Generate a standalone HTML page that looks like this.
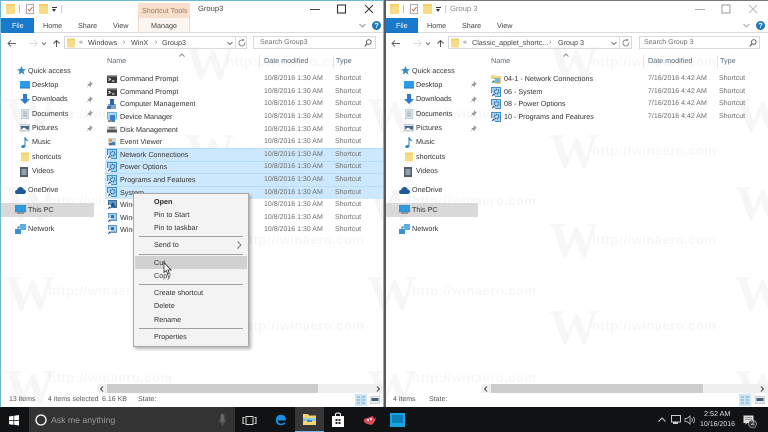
<!DOCTYPE html>
<html><head><meta charset="utf-8"><title>Group3</title>
<style>
html,body{margin:0;padding:0;background:#fff}
#r{position:relative;width:768px;height:432px;overflow:hidden;background:#fff;font-family:"Liberation Sans",sans-serif;font-size:7.2px;color:#333;filter:blur(.35px);text-rendering:geometricPrecision}
.t{position:absolute;white-space:nowrap;line-height:12px;height:12px}
.b{position:absolute}
.g{color:#6d6d6d;font-size:7px}
.h{color:#5a6a7a}
.m{color:#444}
svg.i{position:absolute;overflow:visible}
#wm{position:absolute;left:0;top:0}
</style></head><body>
<div id="r">
<svg width="0" height="0" style="position:absolute">
<defs>
<symbol id="fo" viewBox="0 0 9 10"><rect width="9" height="10" rx=".5" fill="#f8dc85"/><rect width="9" height="2" fill="#f3cf6a"/></symbol>
<symbol id="cmd" viewBox="0 0 10 10"><rect y="1" width="10" height="8" fill="#3a3a3a"/><rect y="1" width="10" height="1.5" fill="#9a9a9a"/><path d="M1.5 4l2 1.3-2 1.3M5 7h2.5" stroke="#fff" fill="none" stroke-width=".9"/></symbol>
<symbol id="cm" viewBox="0 0 10 10"><rect x="1" y="5" width="8" height="5" fill="#7d9fc9"/><rect x="3" y="0" width="4" height="6" fill="#2c5fae"/><rect x="0" y="7" width="4" height="3" fill="#3b6fb8"/></symbol>
<symbol id="dm" viewBox="0 0 10 10"><rect width="10" height="7.5" fill="#6fb3dd"/><rect x="1" y="1" width="8" height="5.5" fill="#a9d6ee"/><rect x="3" y="3" width="5" height="7" fill="#3a7fc0"/><rect x="1" y="8" width="4" height="2" fill="#8a8a8a"/></symbol>
<symbol id="dk" viewBox="0 0 10 10"><rect y="2" width="10" height="6" fill="#d5d5d5"/><rect y="5.5" width="10" height="3" fill="#555"/><rect x="2" y="3" width="6" height="1.5" fill="#777"/></symbol>
<symbol id="ev" viewBox="0 0 10 10"><rect x="1" y="1" width="8" height="8" fill="#cfd6dc"/><rect x="2" y="2" width="3" height="3" fill="#e2a33b"/><rect x="5" y="5" width="3" height="3" fill="#3b7fc2"/><rect x="2" y="6" width="3" height="2" fill="#666"/></symbol>
<symbol id="ap" viewBox="0 0 10 10"><rect width="10" height="10" fill="#3f8fcb"/><rect x="1" y="1" width="8" height="8" fill="#a9d5ef"/><circle cx="5.6" cy="4.6" r="2.2" fill="none" stroke="#1e5f9e" stroke-width="1.3" stroke-dasharray="1.2 .7"/><path d="M0 6h4v4H0z" fill="#fff"/><path d="M1 9.2l2-2M1.6 7H3.2V8.6" stroke="#1a4f92" fill="none" stroke-width=".8"/></symbol>
<symbol id="wn" viewBox="0 0 10 10"><rect x="1" y="0" width="9" height="8" fill="#5f98c8"/><rect x="2" y="1" width="7" height="5.5" fill="#aed3ec"/><rect x="4" y="2" width="3" height="3" fill="#2f6fae"/><path d="M0 5h4v5H0z" fill="#fff"/><path d="M1 9l2-2M1.6 7H3.2V8.6" stroke="#1a4f92" fill="none" stroke-width=".8"/></symbol>
<symbol id="wb" viewBox="0 0 10 10"><rect x="1" y="0" width="9" height="8" fill="#3f6f9f"/><rect x="2" y="1" width="7" height="5" fill="#5d9ad0"/><path d="M3 6l3-4 2 4z" fill="#1d4d80"/><path d="M0 5h4v5H0z" fill="#fff"/><path d="M1 9l2-2M1.6 7H3.2V8.6" stroke="#1a4f92" fill="none" stroke-width=".8"/></symbol>
<symbol id="nc" viewBox="0 0 10 10"><path d="M0 1h3l1 1h6v8H0z" fill="#f3d679"/><rect x="3" y="4" width="6" height="5" fill="#7fb2d8"/><path d="M0 5h4v5H0z" fill="#fff"/><path d="M1 9l2-2M1.6 7H3.2V8.6" stroke="#1a6f42" fill="none" stroke-width=".8"/></symbol>
<symbol id="pin" viewBox="0 0 7 7"><path d="M4 .5l2.5 2.5-1 .3-1 1.2-.2 1.4L1.7 3.3l1.4-.2 1.2-1zM2.6 4.4L.6 6.4" fill="#9a9a9a" stroke="#8a8a8a" stroke-width=".5"/></symbol>
<symbol id="qa" viewBox="0 0 9 9"><path d="M4.5 0l1.3 3 3.2.2-2.5 2 .9 3.3-2.9-1.8-2.8 1.8.8-3.3L0 3.2 3.2 3z" fill="#3a8cc8"/></symbol>
<symbol id="dsk" viewBox="0 0 10 8"><rect width="10" height="7.5" rx=".6" fill="#2b9be8"/><rect y="6.5" width="10" height="1" fill="#1b78bf"/></symbol>
<symbol id="dl" viewBox="0 0 10 10"><path d="M3 0h4v5h3l-5 5-5-5h3z" fill="#2d7cc9"/></symbol>
<symbol id="doc" viewBox="0 0 8 10"><rect width="8" height="10" fill="#dfe5ea" stroke="#8fa3b3" stroke-width=".6"/><path d="M2 3h4M2 5h4M2 7h4" stroke="#7d95aa" stroke-width=".8"/></symbol>
<symbol id="pic" viewBox="0 0 10 8"><rect width="10" height="7" fill="#dbe3ea" stroke="#8a9aa8" stroke-width=".5"/><rect x="1" y="2" width="8" height="3.5" fill="#45688c"/><path d="M1 5.5l3-2 3 2z" fill="#fff"/></symbol>
<symbol id="mus" viewBox="0 0 8 11"><path d="M3.5 0h1c.3 2 3 2.5 2.5 5-.5-1.3-1.5-1.6-2.5-1.8V9C4.500 10.300 3 11 1.800 11 .6 11 0 10.200.3 9.300.7 8.200 2.300 7.700 3.500 8.100z" fill="#2f7fcb"/></symbol>
<symbol id="vid" viewBox="0 0 8 10"><rect width="8" height="10" fill="#565a63"/><rect x="1.500" y="2" width="5" height="6" fill="#8fa0b5"/></symbol>
<symbol id="od" viewBox="0 0 11 7"><path d="M2 7C.6 7 0 6 0 5c0-1.200 1-2 2-2 .5-1.800 2-3 3.500-3C7 0 8.300 1 8.800 2.500 10 2.600 11 3.600 11 4.800 11 6 10 7 9 7z" fill="#1f5a98"/></symbol>
<symbol id="pc" viewBox="0 0 11 9"><rect width="11" height="7" fill="#2f9ae0" stroke="#5a6a75" stroke-width=".5"/><rect x="2" y="7.500" width="7" height="1.300" fill="#7d8790"/></symbol>
<symbol id="net" viewBox="0 0 11 10"><rect x="0" y="5" width="6" height="5" fill="#3a8fd0"/><rect x="5" y="0" width="6" height="6" fill="#5aaee6"/><path d="M3 5V3h2" stroke="#2d6ea5" fill="none"/></symbol>
<symbol id="chk" viewBox="0 0 8 10"><rect x=".4" y=".4" width="7.200" height="9.200" fill="#fff" stroke="#9a9a9a" stroke-width=".8"/><path d="M2 5l1.500 2 3-4" stroke="#c05a3a" fill="none" stroke-width=".9"/></symbol>
<symbol id="ref" viewBox="0 0 8 8"><path d="M6.800 3.500A3 3 0 1 1 4 1h1.500M4.500 0l1.200 1-1.200 1" fill="none" stroke="#6d6d6d" stroke-width=".8"/></symbol>
<symbol id="srch" viewBox="0 0 8 8"><circle cx="4.800" cy="3" r="2.300" fill="none" stroke="#555" stroke-width=".9"/><path d="M3.200 4.600L.8 7.200" stroke="#555" stroke-width="1.100"/></symbol>
<symbol id="det" viewBox="0 0 12 12"><rect width="12" height="12" fill="#cde6f7"/><path d="M2 3h3M2 6h3M2 9h3M6.500 3H10M6.500 6H10M6.500 9H10" stroke="#7ba2bf" stroke-width="1"/></symbol>
<symbol id="lg" viewBox="0 0 10 8"><rect width="10" height="8" fill="#e8e8e8" stroke="#999" stroke-width=".5"/><rect x="1.500" y="2" width="7" height="3" fill="#45607c"/></symbol>
</defs>
</svg>

<!-- watermark -->
<svg id="wm" width="768" height="432">
<g fill="#000" opacity=".03" font-family="Liberation Serif,serif" font-weight="bold" font-size="50">
<text x="185" y="80">W</text><text x="185" y="168">W</text><text x="185" y="257">W</text><text x="185" y="344">W</text>
<text x="549" y="80">W</text><text x="549" y="168">W</text><text x="549" y="257">W</text><text x="549" y="344">W</text>
<text x="5" y="132">W</text><text x="5" y="220">W</text><text x="5" y="310">W</text><text x="5" y="404">W</text>
<text x="367" y="132">W</text><text x="367" y="220">W</text><text x="367" y="310">W</text><text x="367" y="404">W</text>
<text x="735" y="132">W</text><text x="735" y="220">W</text><text x="735" y="310">W</text><text x="735" y="404">W</text>
</g>
<g fill="#000" opacity=".03" font-family="Liberation Sans,sans-serif" font-weight="bold" font-size="13" letter-spacing=".5">
<text x="226" y="66">http://winaero.com</text><text x="226" y="155">http://winaero.com</text><text x="240" y="244">http://winaero.com</text><text x="240" y="330">http://winaero.com</text>
<text x="592" y="66">http://winaero.com</text><text x="592" y="155">http://winaero.com</text><text x="592" y="244">http://winaero.com</text><text x="592" y="330">http://winaero.com</text>
<text x="48" y="118">http://winaero.com</text><text x="48" y="205">http://winaero.com</text><text x="48" y="295">http://winaero.com</text><text x="48" y="382">http://winaero.com</text>
<text x="412" y="118">http://winaero.com</text><text x="412" y="205">http://winaero.com</text><text x="412" y="295">http://winaero.com</text><text x="412" y="382">http://winaero.com</text>
</g>
</svg>

<!-- LEFT WINDOW frame -->
<div class="b" style="left:0;top:0;width:384px;height:1px;background:#6fb7d8"></div>
<div class="b" style="left:0;top:0;width:1px;height:407px;background:#6fb7d8"></div>
<div class="b" style="left:383px;top:0;width:1px;height:407px;background:#6fb7d8"></div>
<!-- RIGHT WINDOW frame -->
<div class="b" style="left:384px;top:0;width:384px;height:1px;background:#777"></div>
<div class="b" style="left:384px;top:0;width:2px;height:407px;background:#555b60"></div>

<!-- LEFT: title/ribbon -->
<svg class="i" style="left:6px;top:4px" width="9" height="10"><use href="#fo"/></svg>
<div class="b" style="left:19px;top:5px;width:1px;height:8px;background:#bbb"></div>
<svg class="i" style="left:26px;top:4px" width="8" height="10"><use href="#chk"/></svg>
<svg class="i" style="left:39px;top:4px" width="9" height="10"><use href="#fo"/></svg>
<div class="b" style="left:52px;top:7px;width:5px;height:1px;background:#333"></div>
<div class="b" style="left:52px;top:9px;width:0;height:0;border:2.500px solid transparent;border-top:3px solid #333"></div>
<div class="b" style="left:61px;top:5px;width:1px;height:8px;background:#ccc"></div>
<div class="b" style="left:138px;top:3px;width:52px;height:15px;background:#f8dfcd"></div>
<div class="b" style="left:138px;top:18px;width:52px;height:15px;background:#fdf6f0;border-left:1px solid #f0d8c6;border-right:1px solid #f0d8c6;box-sizing:border-box"></div>
<div class="t" style="left:142px;top:5px;color:#a5765a">Shortcut Tools</div>
<div class="t" style="left:198px;top:3px;color:#444;font-size:7.600px">Group3</div>
<div class="b" style="left:0;top:32px;width:383px;height:1px;background:#dadbdc"></div>
<div class="b" style="left:1px;top:18px;width:33px;height:15px;background:#1979ca"></div>
<div class="t" style="left:12px;top:20px;color:#fff">File</div>
<div class="t m" style="left:43px;top:20px">Home</div>
<div class="t m" style="left:78px;top:20px">Share</div>
<div class="t m" style="left:113px;top:20px">View</div>
<div class="t m" style="left:151px;top:20px">Manage</div>
<svg class="i" style="left:310px;top:4px" width="70" height="10"><path d="M0 5.500H10" stroke="#444"/><rect x="27.500" y="1" width="8" height="8" fill="none" stroke="#333" stroke-width="1.100"/><path d="M55 1l8 8M63 1l-8 8" stroke="#333" stroke-width="1"/></svg>
<svg class="i" style="left:359px;top:23px" width="7" height="5"><path d="M.5 1l3 3 3-3" stroke="#999" fill="none"/></svg>
<div class="b" style="left:372px;top:21px;width:9px;height:9px;border-radius:5px;background:#1a75bd;color:#fff;font:bold 7.500px/9px 'Liberation Sans',sans-serif;text-align:center">?</div>

<!-- LEFT: address -->
<svg class="i" style="left:7px;top:39px" width="60" height="9"><path d="M9 4.500H1M4 1.500L1 4.500l3 3" stroke="#666" fill="none" stroke-width="1"/><path d="M23 4.500h7M27 1.500l3 3-3 3" stroke="#dcdcdc" fill="none"/><path d="M35 3.500l2 2 2-2" stroke="#777" fill="none"/><path d="M49.500 8V1.500M46.500 4.500l3-3 3 3" stroke="#555" fill="none" stroke-width="1"/></svg>
<div class="b" style="left:64px;top:36px;width:183px;height:13px;border:1px solid #d9d9d9;box-sizing:border-box"></div>
<svg class="i" style="left:67px;top:38px" width="8" height="10"><use href="#fo"/></svg>
<div class="t g" style="left:79px;top:37px">«</div>
<div class="t m" style="left:88px;top:37px">Windows</div>
<div class="t g" style="left:123px;top:37px">›</div>
<div class="t m" style="left:131px;top:37px">WinX</div>
<div class="t g" style="left:155px;top:37px">›</div>
<div class="t m" style="left:162px;top:37px">Group3</div>
<svg class="i" style="left:227px;top:41px" width="7" height="5"><path d="M.5 1l2.500 2.500L5.500 1" stroke="#777" fill="none"/></svg>
<div class="b" style="left:235px;top:37px;width:1px;height:11px;background:#ddd"></div>
<svg class="i" style="left:238px;top:39px" width="8" height="8"><use href="#ref"/></svg>
<div class="b" style="left:253px;top:36px;width:123px;height:13px;border:1px solid #d9d9d9;box-sizing:border-box"></div>
<div class="t g" style="left:260px;top:37px">Search Group3</div>
<svg class="i" style="left:364px;top:39px" width="8" height="8"><use href="#srch"/></svg>

<!-- LEFT: header -->
<svg class="i" style="left:179px;top:53px" width="6" height="4"><path d="M.5 3.500L3 1l2.500 2.500" stroke="#888" fill="none"/></svg>
<div class="t h" style="left:107px;top:55px">Name</div>
<div class="t h" style="left:264px;top:55px">Date modified</div>
<div class="t h" style="left:336px;top:55px">Type</div>
<div class="b" style="left:259px;top:55px;width:1px;height:13px;background:#e5e5e5"></div>
<div class="b" style="left:333px;top:55px;width:1px;height:13px;background:#e5e5e5"></div>

<!-- LEFT: nav -->
<svg class="i" style="left:17px;top:66px" width="9" height="9"><use href="#qa"/></svg><div class="t" style="left:28px;top:65px">Quick access</div>
<svg class="i" style="left:20px;top:81px" width="10" height="8"><use href="#dsk"/></svg><div class="t" style="left:32px;top:79px">Desktop</div><svg class="i" style="left:86px;top:81px" width="7" height="7"><use href="#pin"/></svg>
<svg class="i" style="left:20px;top:94px" width="10" height="10"><use href="#dl"/></svg><div class="t" style="left:32px;top:93px">Downloads</div><svg class="i" style="left:86px;top:96px" width="7" height="7"><use href="#pin"/></svg>
<svg class="i" style="left:21px;top:109px" width="8" height="10"><use href="#doc"/></svg><div class="t" style="left:32px;top:108px">Documents</div><svg class="i" style="left:86px;top:110px" width="7" height="7"><use href="#pin"/></svg>
<svg class="i" style="left:20px;top:124px" width="10" height="8"><use href="#pic"/></svg><div class="t" style="left:32px;top:122px">Pictures</div><svg class="i" style="left:86px;top:125px" width="7" height="7"><use href="#pin"/></svg>
<svg class="i" style="left:21px;top:137px" width="8" height="11"><use href="#mus"/></svg><div class="t" style="left:32px;top:136px">Music</div>
<svg class="i" style="left:21px;top:152px" width="8" height="10"><use href="#fo"/></svg><div class="t" style="left:32px;top:151px">shortcuts</div>
<svg class="i" style="left:20px;top:167px" width="8" height="10"><use href="#vid"/></svg><div class="t" style="left:32px;top:165px">Videos</div>
<svg class="i" style="left:15px;top:187px" width="11" height="7"><use href="#od"/></svg><div class="t" style="left:28px;top:184px">OneDrive</div>
<div class="b" style="left:1px;top:203px;width:93px;height:14px;background:#d9d9d9"></div>
<svg class="i" style="left:15px;top:205px" width="11" height="9"><use href="#pc"/></svg><div class="t" style="left:28px;top:204px">This PC</div>
<svg class="i" style="left:15px;top:224px" width="11" height="10"><use href="#net"/></svg><div class="t" style="left:28px;top:223px">Network</div>

<!-- LEFT: selection -->
<div class="b" style="left:105px;top:148px;width:278px;height:13px;background:#cde8fc;border-top:1px solid #b5dcfa;box-sizing:border-box"></div>
<div class="b" style="left:105px;top:161px;width:278px;height:12px;background:#cde8fc;border-top:1px solid #b5dcfa;box-sizing:border-box"></div>
<div class="b" style="left:105px;top:173px;width:278px;height:13px;background:#cde8fc;border-top:1px solid #b5dcfa;box-sizing:border-box"></div>
<div class="b" style="left:105px;top:186px;width:278px;height:13px;background:#cde8fc;border-top:1px solid #b5dcfa;box-sizing:border-box"></div>

<!-- LEFT: rows -->
<svg class="i" style="left:107px;top:74px" width="10" height="10"><use href="#cmd"/></svg><div class="t" style="left:120px;top:73px">Command Prompt</div><div class="t g" style="left:264px;top:73px">10/8/2016 1:30 AM</div><div class="t g" style="left:335px;top:73px">Shortcut</div>
<svg class="i" style="left:107px;top:87px" width="10" height="10"><use href="#cmd"/></svg><div class="t" style="left:120px;top:85.500px">Command Prompt</div><div class="t g" style="left:264px;top:85.500px">10/8/2016 1:30 AM</div><div class="t g" style="left:335px;top:85.500px">Shortcut</div>
<svg class="i" style="left:107px;top:99px" width="10" height="10"><use href="#cm"/></svg><div class="t" style="left:120px;top:98px">Computer Management</div><div class="t g" style="left:264px;top:98px">10/8/2016 1:30 AM</div><div class="t g" style="left:335px;top:98px">Shortcut</div>
<svg class="i" style="left:107px;top:112px" width="10" height="10"><use href="#dm"/></svg><div class="t" style="left:120px;top:111px">Device Manager</div><div class="t g" style="left:264px;top:111px">10/8/2016 1:30 AM</div><div class="t g" style="left:335px;top:111px">Shortcut</div>
<svg class="i" style="left:107px;top:124px" width="10" height="10"><use href="#dk"/></svg><div class="t" style="left:120px;top:123.500px">Disk Management</div><div class="t g" style="left:264px;top:123.500px">10/8/2016 1:30 AM</div><div class="t g" style="left:335px;top:123.500px">Shortcut</div>
<svg class="i" style="left:107px;top:137px" width="10" height="10"><use href="#ev"/></svg><div class="t" style="left:120px;top:136px">Event Viewer</div><div class="t g" style="left:264px;top:136px">10/8/2016 1:30 AM</div><div class="t g" style="left:335px;top:136px">Shortcut</div>
<svg class="i" style="left:107px;top:149px" width="10" height="10"><use href="#ap"/></svg><div class="t" style="left:120px;top:148.500px">Network Connections</div><div class="t g" style="left:264px;top:148.500px">10/8/2016 1:30 AM</div><div class="t g" style="left:335px;top:148.500px">Shortcut</div>
<svg class="i" style="left:107px;top:162px" width="10" height="10"><use href="#ap"/></svg><div class="t" style="left:120px;top:161px">Power Options</div><div class="t g" style="left:264px;top:161px">10/8/2016 1:30 AM</div><div class="t g" style="left:335px;top:161px">Shortcut</div>
<svg class="i" style="left:107px;top:175px" width="10" height="10"><use href="#ap"/></svg><div class="t" style="left:120px;top:174px">Programs and Features</div><div class="t g" style="left:264px;top:174px">10/8/2016 1:30 AM</div><div class="t g" style="left:335px;top:174px">Shortcut</div>
<svg class="i" style="left:107px;top:187px" width="10" height="10"><use href="#ap"/></svg><div class="t" style="left:120px;top:186.500px">System</div><div class="t g" style="left:264px;top:186.500px">10/8/2016 1:30 AM</div><div class="t g" style="left:335px;top:186.500px">Shortcut</div>
<svg class="i" style="left:107px;top:200px" width="10" height="10"><use href="#wb"/></svg><div class="t" style="left:120px;top:199px">Windows Mobility Center</div><div class="t g" style="left:264px;top:199px">10/8/2016 1:30 AM</div><div class="t g" style="left:335px;top:199px">Shortcut</div>
<svg class="i" style="left:107px;top:213px" width="10" height="10"><use href="#wn"/></svg><div class="t" style="left:120px;top:211.500px">Windows PowerShell</div><div class="t g" style="left:264px;top:211.500px">10/8/2016 1:30 AM</div><div class="t g" style="left:335px;top:211.500px">Shortcut</div>
<svg class="i" style="left:107px;top:225px" width="10" height="10"><use href="#wn"/></svg><div class="t" style="left:120px;top:224px">Windows PowerShell</div><div class="t g" style="left:264px;top:224px">10/8/2016 1:30 AM</div><div class="t g" style="left:335px;top:224px">Shortcut</div>

<!-- LEFT: scrollbar & status -->
<div class="b" style="left:97px;top:384px;width:286px;height:9px;background:#f0f0f0"></div>
<div class="b" style="left:107px;top:384px;width:211px;height:9px;background:#cdcdcd"></div>
<svg class="i" style="left:99px;top:386px" width="5" height="6"><path d="M4 .5L1.500 3 4 5.500" stroke="#444" fill="none"/></svg>
<svg class="i" style="left:376px;top:386px" width="5" height="6"><path d="M1 .5L3.500 3 1 5.500" stroke="#444" fill="none"/></svg>
<div class="t g" style="left:9px;top:394px;color:#555">13 items</div>
<div class="t g" style="left:48px;top:394px;color:#555">4 items selected</div>
<div class="t g" style="left:102px;top:394px;color:#555">6.16 KB</div>
<div class="t g" style="left:138px;top:394px;color:#555">State:</div>
<svg class="i" style="left:355px;top:394px" width="12" height="12"><use href="#det"/></svg>
<svg class="i" style="left:370px;top:396px" width="10" height="8"><use href="#lg"/></svg>

<!-- RIGHT: ribbon -->
<svg class="i" style="left:390px;top:4px" width="9" height="10"><use href="#fo"/></svg>
<div class="b" style="left:403px;top:5px;width:1px;height:8px;background:#bbb"></div>
<svg class="i" style="left:410px;top:4px" width="8" height="10"><use href="#chk"/></svg>
<svg class="i" style="left:423px;top:4px" width="9" height="10"><use href="#fo"/></svg>
<div class="b" style="left:436px;top:7px;width:5px;height:1px;background:#333"></div>
<div class="b" style="left:436px;top:9px;width:0;height:0;border:2.500px solid transparent;border-top:3px solid #333"></div>
<div class="b" style="left:445px;top:5px;width:1px;height:8px;background:#ccc"></div>
<div class="t" style="left:450px;top:3px;color:#8a8a8a;font-size:7.600px">Group 3</div>
<div class="b" style="left:386px;top:32px;width:382px;height:1px;background:#dadbdc"></div>
<div class="b" style="left:386px;top:18px;width:32px;height:15px;background:#1979ca"></div>
<div class="t" style="left:396px;top:20px;color:#fff">File</div>
<div class="t m" style="left:427px;top:20px">Home</div>
<div class="t m" style="left:462px;top:20px">Share</div>
<div class="t m" style="left:497px;top:20px">View</div>
<svg class="i" style="left:695px;top:4px" width="70" height="10"><path d="M0 5.500H10" stroke="#aaa"/><rect x="27" y="1" width="8" height="8" fill="none" stroke="#999" stroke-width="1"/><path d="M54 1l8 8M62 1l-8 8" stroke="#bbb" stroke-width="1"/></svg>
<svg class="i" style="left:743px;top:23px" width="7" height="5"><path d="M.5 1l3 3 3-3" stroke="#aaa" fill="none"/></svg>
<div class="b" style="left:756px;top:21px;width:9px;height:9px;border-radius:5px;background:#1a75bd;color:#fff;font:bold 7.500px/9px 'Liberation Sans',sans-serif;text-align:center">?</div>

<!-- RIGHT: address -->
<svg class="i" style="left:391px;top:39px" width="60" height="9"><path d="M9 4.500H1M4 1.500L1 4.500l3 3" stroke="#666" fill="none" stroke-width="1"/><path d="M23 4.500h7M27 1.500l3 3-3 3" stroke="#dcdcdc" fill="none"/><path d="M35 3.500l2 2 2-2" stroke="#777" fill="none"/><path d="M49.500 8V1.500M46.500 4.500l3-3 3 3" stroke="#555" fill="none" stroke-width="1"/></svg>
<div class="b" style="left:448px;top:36px;width:184px;height:13px;border:1px solid #d9d9d9;box-sizing:border-box"></div>
<svg class="i" style="left:451px;top:38px" width="8" height="10"><use href="#fo"/></svg>
<div class="t g" style="left:463px;top:37px">«</div>
<div class="t m" style="left:472px;top:37px">Classic_applet_shortc...</div>
<div class="t g" style="left:549px;top:37px">›</div>
<div class="t m" style="left:558px;top:37px">Group 3</div>
<svg class="i" style="left:611px;top:41px" width="7" height="5"><path d="M.5 1l2.500 2.500L5.500 1" stroke="#777" fill="none"/></svg>
<div class="b" style="left:619px;top:37px;width:1px;height:11px;background:#ddd"></div>
<svg class="i" style="left:622px;top:39px" width="8" height="8"><use href="#ref"/></svg>
<div class="b" style="left:639px;top:36px;width:121px;height:13px;border:1px solid #d9d9d9;box-sizing:border-box"></div>
<div class="t g" style="left:644px;top:37px">Search Group 3</div>
<svg class="i" style="left:749px;top:39px" width="8" height="8"><use href="#srch"/></svg>

<!-- RIGHT: header -->
<svg class="i" style="left:563px;top:53px" width="6" height="4"><path d="M.5 3.500L3 1l2.500 2.500" stroke="#888" fill="none"/></svg>
<div class="t h" style="left:491px;top:55px">Name</div>
<div class="t h" style="left:648px;top:55px">Date modified</div>
<div class="t h" style="left:720px;top:55px">Type</div>
<div class="b" style="left:643px;top:55px;width:1px;height:13px;background:#e5e5e5"></div>
<div class="b" style="left:717px;top:55px;width:1px;height:13px;background:#e5e5e5"></div>

<!-- RIGHT: nav -->
<svg class="i" style="left:401px;top:66px" width="9" height="9"><use href="#qa"/></svg><div class="t" style="left:412px;top:65px">Quick access</div>
<svg class="i" style="left:404px;top:81px" width="10" height="8"><use href="#dsk"/></svg><div class="t" style="left:416px;top:79px">Desktop</div><svg class="i" style="left:470px;top:81px" width="7" height="7"><use href="#pin"/></svg>
<svg class="i" style="left:404px;top:94px" width="10" height="10"><use href="#dl"/></svg><div class="t" style="left:416px;top:93px">Downloads</div><svg class="i" style="left:470px;top:96px" width="7" height="7"><use href="#pin"/></svg>
<svg class="i" style="left:405px;top:109px" width="8" height="10"><use href="#doc"/></svg><div class="t" style="left:416px;top:108px">Documents</div><svg class="i" style="left:470px;top:110px" width="7" height="7"><use href="#pin"/></svg>
<svg class="i" style="left:404px;top:124px" width="10" height="8"><use href="#pic"/></svg><div class="t" style="left:416px;top:122px">Pictures</div><svg class="i" style="left:470px;top:125px" width="7" height="7"><use href="#pin"/></svg>
<svg class="i" style="left:405px;top:137px" width="8" height="11"><use href="#mus"/></svg><div class="t" style="left:416px;top:136px">Music</div>
<svg class="i" style="left:405px;top:152px" width="8" height="10"><use href="#fo"/></svg><div class="t" style="left:416px;top:151px">shortcuts</div>
<svg class="i" style="left:404px;top:167px" width="8" height="10"><use href="#vid"/></svg><div class="t" style="left:416px;top:165px">Videos</div>
<svg class="i" style="left:399px;top:187px" width="11" height="7"><use href="#od"/></svg><div class="t" style="left:412px;top:184px">OneDrive</div>
<div class="b" style="left:386px;top:203px;width:92px;height:14px;background:#d9d9d9"></div>
<svg class="i" style="left:399px;top:205px" width="11" height="9"><use href="#pc"/></svg><div class="t" style="left:412px;top:204px">This PC</div>
<svg class="i" style="left:399px;top:224px" width="11" height="10"><use href="#net"/></svg><div class="t" style="left:412px;top:223px">Network</div>

<!-- RIGHT: rows -->
<svg class="i" style="left:491px;top:74px" width="10" height="10"><use href="#nc"/></svg><div class="t" style="left:504px;top:73px">04-1 - Network Connections</div><div class="t g" style="left:648px;top:73px">7/16/2016 4:42 AM</div><div class="t g" style="left:719px;top:73px">Shortcut</div>
<svg class="i" style="left:491px;top:87px" width="10" height="10"><use href="#ap"/></svg><div class="t" style="left:504px;top:85.500px">06 - System</div><div class="t g" style="left:648px;top:85.500px">7/16/2016 4:42 AM</div><div class="t g" style="left:719px;top:85.500px">Shortcut</div>
<svg class="i" style="left:491px;top:99px" width="10" height="10"><use href="#ap"/></svg><div class="t" style="left:504px;top:98px">08 - Power Options</div><div class="t g" style="left:648px;top:98px">7/16/2016 4:42 AM</div><div class="t g" style="left:719px;top:98px">Shortcut</div>
<svg class="i" style="left:491px;top:112px" width="10" height="10"><use href="#ap"/></svg><div class="t" style="left:504px;top:111px">10 - Programs and Features</div><div class="t g" style="left:648px;top:111px">7/16/2016 4:42 AM</div><div class="t g" style="left:719px;top:111px">Shortcut</div>

<!-- RIGHT: scrollbar & status -->
<div class="b" style="left:481px;top:384px;width:287px;height:9px;background:#f0f0f0"></div>
<div class="b" style="left:491px;top:384px;width:212px;height:9px;background:#cdcdcd"></div>
<svg class="i" style="left:483px;top:386px" width="5" height="6"><path d="M4 .5L1.500 3 4 5.500" stroke="#444" fill="none"/></svg>
<svg class="i" style="left:760px;top:386px" width="5" height="6"><path d="M1 .5L3.500 3 1 5.500" stroke="#444" fill="none"/></svg>
<div class="t" style="left:393px;top:394px;color:#555;font-size:7px">4 items</div>
<div class="t" style="left:429px;top:394px;color:#555;font-size:7px">State:</div>
<svg class="i" style="left:739px;top:394px" width="12" height="12"><use href="#det"/></svg>
<svg class="i" style="left:755px;top:396px" width="10" height="8"><use href="#lg"/></svg>

<!-- CONTEXT MENU -->
<div class="b" style="left:133px;top:193px;width:116px;height:154px;background:#f3f3f3;border:1px solid #a8a8a8;box-sizing:border-box;box-shadow:2px 2px 3px rgba(0,0,0,.3)"></div>
<div class="b" style="left:135px;top:256px;width:112px;height:13px;background:#d1d1d1"></div>
<div class="t" style="left:154px;top:196px;font-weight:bold;color:#222">Open</div>
<div class="t" style="left:154px;top:208.500px">Pin to Start</div>
<div class="t" style="left:154px;top:222px">Pin to taskbar</div>
<div class="b" style="left:139px;top:236px;width:104px;height:1px;background:#a0a0a0"></div>
<div class="t" style="left:154px;top:239px">Send to</div>
<svg class="i" style="left:237px;top:241px" width="5" height="8"><path d="M.5 .5L4 4 .5 7.500" stroke="#777" fill="none"/></svg>
<div class="b" style="left:139px;top:254px;width:104px;height:1px;background:#a0a0a0"></div>
<div class="t" style="left:154px;top:257px">Cut</div>
<div class="t" style="left:154px;top:270px">Copy</div>
<div class="b" style="left:139px;top:284px;width:104px;height:1px;background:#a0a0a0"></div>
<div class="t" style="left:154px;top:287px">Create shortcut</div>
<div class="t" style="left:154px;top:300px">Delete</div>
<div class="t" style="left:154px;top:313.500px">Rename</div>
<div class="b" style="left:139px;top:328px;width:104px;height:1px;background:#a0a0a0"></div>
<div class="t" style="left:154px;top:331px">Properties</div>
<svg class="i" style="left:163px;top:262px" width="9" height="13"><path d="M1 .5v10l2.200-2 1.600 3.500 1.600-.8L4.900 8H8z" fill="#fff" stroke="#222" stroke-width=".8"/></svg>

<!-- TASKBAR -->
<div class="b" style="left:0;top:407px;width:768px;height:25px;background:#101214"></div>
<div class="b" style="left:29px;top:407px;width:206px;height:25px;background:#333"></div>
<svg class="i" style="left:9px;top:415px" width="11" height="11"><path d="M0 1.500L4.500.8v4.200H0zM5.200.7L10 0v5H5.200zM0 5.700h4.500v4.200L0 9.200zM5.200 5.700H10v4.800l-4.800-.7z" fill="#fff"/></svg>
<svg class="i" style="left:35px;top:414px" width="12" height="12"><circle cx="6" cy="6" r="5" fill="none" stroke="#fff" stroke-width="1.300"/></svg>
<div class="t" style="left:51px;top:414px;color:#9c9c9c;font-size:8.700px">Ask me anything</div>
<svg class="i" style="left:219px;top:414px" width="7" height="12"><rect x="1.500" width="4" height="8" rx="2" fill="#666"/><path d="M.5 6c0 4 6 4 6 0M3.500 9v2.500" stroke="#666" fill="none"/></svg>
<svg class="i" style="left:243px;top:416px" width="13" height="9"><rect x="3" y=".5" width="7" height="8" fill="none" stroke="#ddd"/><path d="M1.500 1.500H0v6h1.500M11.500 1.500H13v6h-1.500" stroke="#ddd" fill="none"/></svg>
<svg class="i" style="left:275px;top:414px" width="12" height="12" viewBox="0 0 12 12"><path d="M1 6.500H11C11 3 9 .8 6 .8 3 .8 .8 3 .8 6.200c0 3.300 2.300 5 5 5 1.700 0 3.200-.5 4.200-1.300V8c-1 1-2.500 1.600-4 1.600-1.800 0-3-1-3.200-3z" fill="#1a8fe0"/></svg>
<div class="b" style="left:295px;top:407px;width:29px;height:25px;background:#363636"></div>
<div class="b" style="left:295px;top:431px;width:29px;height:1px;background:#76b9ed"></div>
<svg class="i" style="left:303px;top:414px" width="13" height="11"><path d="M0 0h5l1 1.500h7V11H0z" fill="#f5d572"/><rect x="0" y="4" width="13" height="3" fill="#8fc5e0"/><rect x="4" y="6" width="5" height="2" fill="#3a86c8"/></svg>
<svg class="i" style="left:332px;top:413px" width="12" height="14"><path d="M0 3h12v11H0z" fill="#fff"/><path d="M3.500 3V1.500C3.500.5 4.500 0 6 0s2.500.5 2.500 1.500V3" stroke="#fff" fill="none"/><rect x="3.500" y="6" width="2" height="2" fill="#222"/><rect x="6.500" y="6" width="2" height="2" fill="#222"/><rect x="3.500" y="9" width="2" height="2" fill="#222"/><rect x="6.500" y="9" width="2" height="2" fill="#222"/></svg>
<svg class="i" style="left:363px;top:414px" width="14" height="12"><path d="M1 5l9-3 1 3 2-2-1 4-3 4-5-1-3-2z" fill="#d94a5a"/><circle cx="5" cy="6" r="1" fill="#fff"/><circle cx="8" cy="5" r="1" fill="#fff"/></svg>
<div class="b" style="left:390px;top:413px;width:15px;height:14px;background:#16a5e0"></div>
<div class="b" style="left:392px;top:415px;width:11px;height:8px;background:#0d7fb8"></div>
<svg class="i" style="left:658px;top:417px" width="8" height="5"><path d="M.5 4.500L4 1l3.500 3.500" stroke="#ccc" fill="none"/></svg>
<svg class="i" style="left:671px;top:415px" width="10" height="10"><rect x=".5" y=".5" width="9" height="6.500" fill="none" stroke="#ccc"/><rect x="2" y="7" width="5" height="2" fill="#ccc"/></svg>
<svg class="i" style="left:685px;top:415px" width="11" height="10"><path d="M0 3.500h2L5 1v8L2 6.500H0z" fill="none" stroke="#ccc" stroke-width=".8"/><path d="M6.500 3c1 1 1 3 0 4M8.300 1.800c1.600 1.600 1.600 4.800 0 6.400" fill="none" stroke="#ccc" stroke-width=".8"/></svg>
<div class="t" style="left:704px;top:408px;color:#ddd">2:52 AM</div>
<div class="t" style="left:700px;top:419px;color:#ddd;font-size:7px">10/16/2016</div>
<svg class="i" style="left:743px;top:415px" width="14" height="14"><path d="M.5 .5h10v7.500H4L2.500 10V8H.5z" fill="#ddd"/><path d="M2 2.500h7M2 4.500h7" stroke="#555" stroke-width=".6"/><circle cx="9.500" cy="9" r="4" fill="#333" stroke="#bbb" stroke-width=".6"/></svg>
<div class="t" style="left:751px;top:418px;color:#fff;font-size:6.500px">2</div>
</div>
</body></html>
